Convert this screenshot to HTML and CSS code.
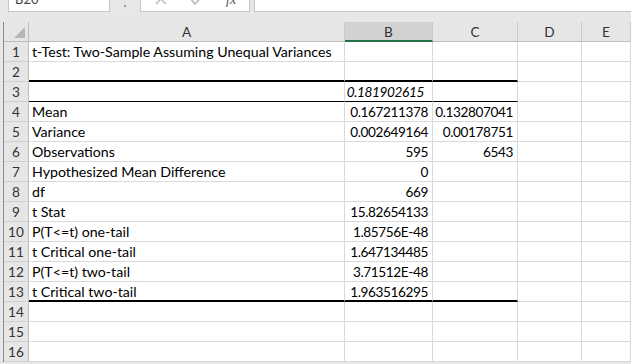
FILE: index.html
```html
<!DOCTYPE html>
<html>
<head>
<meta charset="utf-8">
<link rel="stylesheet" href="styles.css">
</head>
<body>
<div class="app">
  <div class="fbar">
    <div class="namebox"><span>B20</span></div>
    <div class="grip"></div>
    <div class="iconbox">
      <svg class="ic ic-x" width="14" height="12" viewBox="0 0 14 12"><path d="M1 -6 L11 4 M11 -6 L1 4" stroke="#b8b8b8" stroke-width="1.4" fill="none"/></svg>
      <svg class="ic ic-check" width="16" height="12" viewBox="0 0 16 12"><path d="M1 -2 L6 4 L15 -6" stroke="#b8b8b8" stroke-width="1.6" fill="none"/></svg>
      <span class="fx">fx</span>
    </div>
    <div class="input"></div>
  </div>
  <div class="sheet">
    <div class="c corner"><svg width="12" height="11" viewBox="0 0 12 11"><path d="M11 0 L11 11 L0 11 Z" fill="#b5b5b5"/></svg></div>
    <div class="c ch">A</div>
    <div class="c ch sel">B</div>
    <div class="c ch">C</div>
    <div class="c ch">D</div>
    <div class="c ch">E</div>

    <div class="c rh">1</div>
    <div class="c">t-Test: Two-Sample Assuming Unequal Variances</div>
    <div class="c"></div><div class="c"></div><div class="c"></div><div class="c"></div>

    <div class="c rh">2</div>
    <div class="c thick"></div><div class="c thick"></div><div class="c thick"></div><div class="c"></div><div class="c"></div>

    <div class="c rh">3</div>
    <div class="c thin"></div>
    <div class="c thin num it">0.181902615</div>
    <div class="c thin"></div><div class="c"></div><div class="c"></div>

    <div class="c rh">4</div>
    <div class="c">Mean</div>
    <div class="c num">0.167211378</div>
    <div class="c num">0.132807041</div>
    <div class="c"></div><div class="c"></div>

    <div class="c rh">5</div>
    <div class="c">Variance</div>
    <div class="c num">0.002649164</div>
    <div class="c num">0.00178751</div>
    <div class="c"></div><div class="c"></div>

    <div class="c rh">6</div>
    <div class="c">Observations</div>
    <div class="c num">595</div>
    <div class="c num">6543</div>
    <div class="c"></div><div class="c"></div>

    <div class="c rh">7</div>
    <div class="c">Hypothesized Mean Difference</div>
    <div class="c num">0</div>
    <div class="c"></div><div class="c"></div><div class="c"></div>

    <div class="c rh">8</div>
    <div class="c">df</div>
    <div class="c num">669</div>
    <div class="c"></div><div class="c"></div><div class="c"></div>

    <div class="c rh">9</div>
    <div class="c">t Stat</div>
    <div class="c num">15.82654133</div>
    <div class="c"></div><div class="c"></div><div class="c"></div>

    <div class="c rh">10</div>
    <div class="c">P(T&lt;=t) one-tail</div>
    <div class="c num">1.85756E-48</div>
    <div class="c"></div><div class="c"></div><div class="c"></div>

    <div class="c rh">11</div>
    <div class="c">t Critical one-tail</div>
    <div class="c num">1.647134485</div>
    <div class="c"></div><div class="c"></div><div class="c"></div>

    <div class="c rh">12</div>
    <div class="c">P(T&lt;=t) two-tail</div>
    <div class="c num">3.71512E-48</div>
    <div class="c"></div><div class="c"></div><div class="c"></div>

    <div class="c rh">13</div>
    <div class="c thick">t Critical two-tail</div>
    <div class="c thick num">1.963516295</div>
    <div class="c thick"></div>
    <div class="c"></div><div class="c"></div>

    <div class="c rh">14</div>
    <div class="c"></div><div class="c"></div><div class="c"></div><div class="c"></div><div class="c"></div>

    <div class="c rh">15</div>
    <div class="c"></div><div class="c"></div><div class="c"></div><div class="c"></div><div class="c"></div>

    <div class="c rh">16</div>
    <div class="c"></div><div class="c"></div><div class="c"></div><div class="c"></div><div class="c"></div>
  </div>
</div>
</body>
</html>
```

FILE: styles.css
```css
* { box-sizing: border-box; }
html, body { margin: 0; padding: 0; }
body {
  width: 631px;
  height: 364px;
  overflow: hidden;
  background: #e7e7e7;
  font-family: Lato, "Liberation Sans", sans-serif;
  font-size: 14.2px;
  color: #000;
}
.app { display: flex; flex-direction: column; }
.fbar {
  height: 12px;
  display: flex;
  align-items: flex-start;
  padding-left: 8px;
  margin-bottom: 10px;
}
.namebox {
  width: 102px;
  height: 12px;
  background: #fff;
  border: 1px solid #c6c6c6;
  border-top: none;
  overflow: hidden;
  padding-left: 6px;
  color: #444;
  font-size: 13px;
}
.namebox span { display: block; margin-top: -9px; line-height: 16px; }
.grip {
  width: 2px; height: 2px; background: #9a9a9a;
  margin: 5px 14px 0 14px;
}
.iconbox {
  width: 110px;
  height: 12px;
  background: #fff;
  border: 1px solid #c6c6c6;
  border-top: none;
  display: flex;
  align-items: flex-start;
  overflow: hidden;
}
.ic-x { margin-left: 14px; }
.ic-check { margin-left: 20px; }
.fx {
  margin-left: 21px;
  margin-top: -8px;
  font-family: "Liberation Serif", serif;
  font-style: italic;
  font-size: 14px;
  color: #555;
  line-height: 16px;
}
.input {
  flex: 1;
  height: 12px;
  margin-left: 4px;
  background: #fff;
  border: 1px solid #c6c6c6;
  border-top: none;
  border-right: none;
}
.sheet {
  margin-left: 3px;
  border-left: 1px solid #8c8c8c;
  background: #fff;
  display: grid;
  grid-template-columns: 25px 316px 88px 85px 64px 1fr;
  grid-auto-rows: 20px;
}
.c {
  border-right: 1px solid #d9d9d9;
  border-bottom: 1px solid #d9d9d9;
  display: flex;
  align-items: center;
  padding: 2px 3px 0 3px;
  white-space: nowrap;
  overflow: visible;
  line-height: 1;
}
.corner {
  background: #e6e6e6;
  border-right: 1px solid #bdbdbd;
  border-bottom: 1px solid #bdbdbd;
  align-items: flex-end;
  justify-content: flex-end;
  padding: 0 2px 3px 0;
}
.ch {
  background: #e6e6e6;
  border-right: 1px solid #cbcbcb;
  border-bottom: 1px solid #bdbdbd;
  justify-content: center;
  color: #333;
  font-size: 13.6px;
}
.ch.sel {
  background: #d2d2d2;
  border-bottom: 2px solid #217346;
  padding-top: 3px;
}
.rh {
  background: #e6e6e6;
  border-right: 1px solid #bdbdbd;
  border-bottom: 1px solid #cfcfcf;
  justify-content: center;
  color: #333;
  font-size: 13.6px;
}
.num {
  justify-content: flex-end;
  font-size: 13.6px;
  letter-spacing: -0.38px;
  padding-right: 4px;
}
.it { font-style: italic; padding-right: 8px; }
.thick { border-bottom: 2px solid #000; padding-top: 3px; }
.thin { border-bottom: 1px solid #000; }
```
